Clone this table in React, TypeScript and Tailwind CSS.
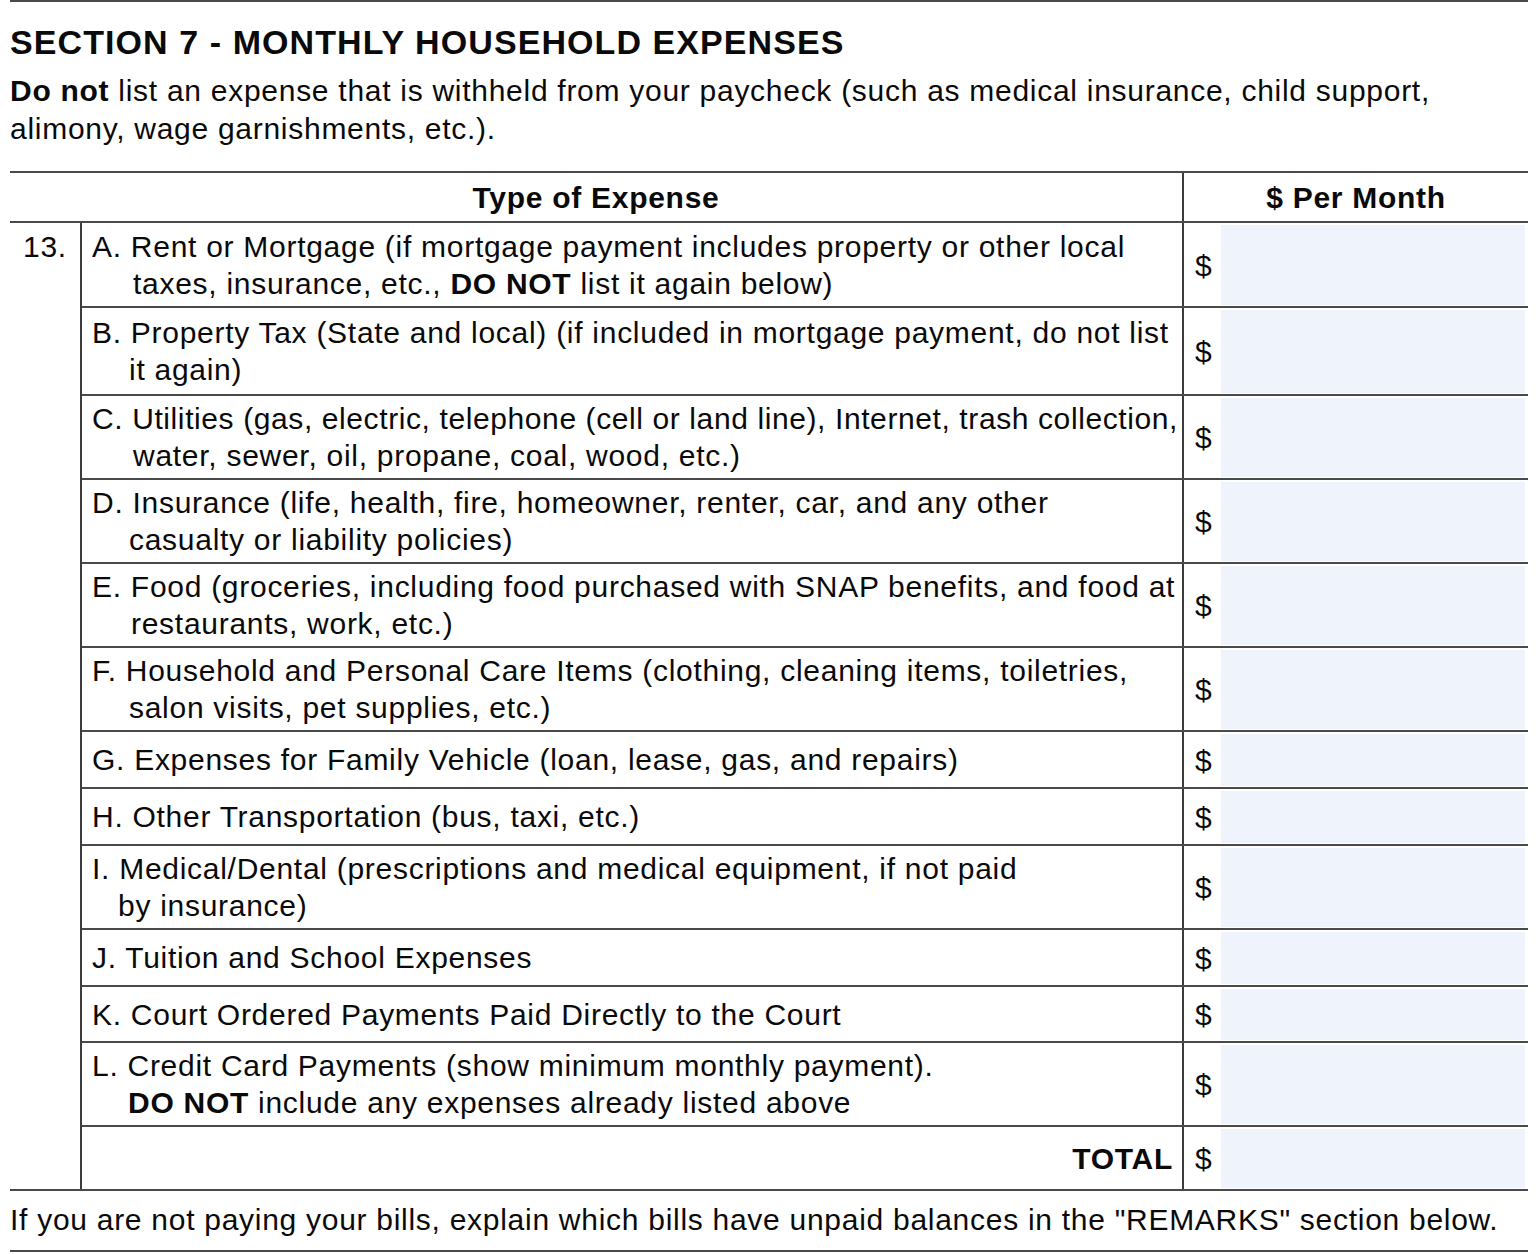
type Row = {
  h: string;
  lines: React.ReactNode[];
  indent?: string;
  tight?: boolean;
};

const rows: Row[] = [
  {
    h: "h-[83px]",
    indent: "pl-[41px]",
    lines: [
      "A. Rent or Mortgage (if mortgage payment includes property or other local",
      <>taxes, insurance, etc., <span className="font-bold">DO NOT</span> list it again below)</>,
    ],
  },
  {
    h: "h-[88px]",
    indent: "pl-[37px]",
    lines: ["B. Property Tax (State and local) (if included in mortgage payment, do not list", "it again)"],
  },
  {
    h: "h-[84px]",
    indent: "pl-[41px]",
    tight: true,
    lines: [
      "C. Utilities (gas, electric, telephone (cell or land line), Internet, trash collection,",
      "water, sewer, oil, propane, coal, wood, etc.)",
    ],
  },
  {
    h: "h-[84px]",
    indent: "pl-[37px]",
    lines: ["D. Insurance (life, health, fire, homeowner, renter, car, and any other", "casualty or liability policies)"],
  },
  {
    h: "h-[84px]",
    indent: "pl-[39px]",
    lines: ["E. Food (groceries, including food purchased with SNAP benefits, and food at", "restaurants, work, etc.)"],
  },
  {
    h: "h-[84px]",
    indent: "pl-[37px]",
    lines: ["F. Household and Personal Care Items (clothing, cleaning items, toiletries,", "salon visits, pet supplies, etc.)"],
  },
  { h: "h-[57px]", lines: ["G. Expenses for Family Vehicle (loan, lease, gas, and repairs)"] },
  { h: "h-[57px]", lines: ["H. Other Transportation (bus, taxi, etc.)"] },
  {
    h: "h-[84px]",
    indent: "pl-[26px]",
    lines: ["I. Medical/Dental (prescriptions and medical equipment, if not paid", "by insurance)"],
  },
  { h: "h-[57px]", lines: ["J. Tuition and School Expenses"] },
  { h: "h-[56px]", lines: ["K. Court Ordered Payments Paid Directly to the Court"] },
  {
    h: "h-[84px]",
    indent: "pl-[36px]",
    lines: [
      "L. Credit Card Payments (show minimum monthly payment).",
      <><span className="font-bold">DO NOT</span> include any expenses already listed above</>,
    ],
  },
];

// right hand "$ + shaded box" cell
function AmountCell() {
  return (
    <div className="w-[346px] shrink-0 border-l-2 border-[#3c3c3c] flex pt-[2px] pb-[1px] pr-[3px]">
      <div className="w-[37px] shrink-0 flex items-center pl-[11px]">$</div>
      <div className="flex-1 bg-[#eff3fc]" />
    </div>
  );
}

export default function App() {
  return (
    <div className="w-[1536px] h-[1254px] bg-white text-[#0a0a0a] font-['Liberation_Sans',Arial,sans-serif] overflow-hidden">
      <div className="ml-[10px] w-[1518px]">
        <div className="border-t-2 border-[#4a4a4a]" />
        <h1 className="mt-[20px] text-[34px] leading-[40px] font-bold tracking-[1.08px] whitespace-nowrap">
          SECTION 7 - MONTHLY HOUSEHOLD EXPENSES
        </h1>
        <p className="mt-[10px] text-[30px] leading-[37.5px] tracking-[0.72px] whitespace-nowrap">
          <span className="font-bold">Do not</span> list an expense that is withheld from your paycheck (such as medical insurance, child support,
          <br />
          alimony, wage garnishments, etc.).
        </p>

        {/* table */}
        <div className="mt-[24px] text-[30px] leading-[37px] tracking-[0.72px] border-b-2 border-[#4a4a4a]">
          <div className="h-[52px] flex border-t-2 border-b-2 border-[#4a4a4a] font-bold">
            <div className="w-[1172px] shrink-0 flex items-center justify-center">Type of Expense</div>
            <div className="flex-1 border-l-2 border-[#3c3c3c] flex items-center justify-center">$ Per Month</div>
          </div>

          <div className="flex">
            <div className="w-[70px] shrink-0 pl-[13px] pt-[5px]">13.</div>
            <div className="w-[1448px] shrink-0 border-l-2 border-[#3c3c3c]">
              {rows.map((r, i) => (
                <div key={i} className={`${r.h} flex ${i > 0 ? "border-t-2 border-[#4a4a4a]" : ""}`}>
                  <div className="flex-1 min-w-0 flex flex-col justify-center pl-[10px] whitespace-nowrap">
                    {r.lines.map((l, j) => (
                      <div key={j} className={`${j > 0 ? r.indent : ""} ${j === 0 && r.tight ? "tracking-[0.6px]" : ""}`}>
                        {l}
                      </div>
                    ))}
                  </div>
                  <AmountCell />
                </div>
              ))}
              <div className="h-[64px] flex border-t-2 border-[#4a4a4a]">
                <div className="flex-1 min-w-0 flex items-center justify-end pr-[9px] font-bold">TOTAL</div>
                <AmountCell />
              </div>
            </div>
          </div>
        </div>

        <p className="mt-[10px] text-[30px] leading-[37px] tracking-[0.72px] whitespace-nowrap">
          If you are not paying your bills, explain which bills have unpaid balances in the "REMARKS" section below.
        </p>
        <div className="mt-[12px] border-t-2 border-[#4a4a4a]" />
      </div>
    </div>
  );
}
